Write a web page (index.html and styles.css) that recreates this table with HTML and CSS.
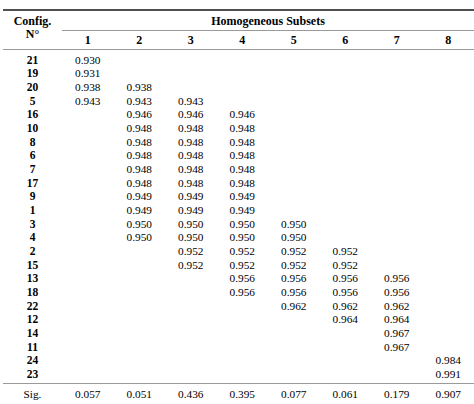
FILE: index.html
```html
<!DOCTYPE html>
<html>
<head>
<meta charset="utf-8">
<link rel="stylesheet" href="styles.css">
</head>
<body>
<table class="t">
<colgroup><col class="c0"><col><col><col><col><col><col><col><col></colgroup>
<thead>
<tr class="h1"><th rowspan="2" class="cfg">Config.<br>N°</th><th colspan="8" class="grp">Homogeneous Subsets</th></tr>
<tr class="h2"><th>1</th><th>2</th><th>3</th><th>4</th><th>5</th><th>6</th><th>7</th><th>8</th></tr>
</thead>
<tbody>
<tr class="first"><th>21</th><td>0.930</td><td></td><td></td><td></td><td></td><td></td><td></td><td></td></tr>
<tr><th>19</th><td>0.931</td><td></td><td></td><td></td><td></td><td></td><td></td><td></td></tr>
<tr><th>20</th><td>0.938</td><td>0.938</td><td></td><td></td><td></td><td></td><td></td><td></td></tr>
<tr><th>5</th><td>0.943</td><td>0.943</td><td>0.943</td><td></td><td></td><td></td><td></td><td></td></tr>
<tr><th>16</th><td></td><td>0.946</td><td>0.946</td><td>0.946</td><td></td><td></td><td></td><td></td></tr>
<tr><th>10</th><td></td><td>0.948</td><td>0.948</td><td>0.948</td><td></td><td></td><td></td><td></td></tr>
<tr><th>8</th><td></td><td>0.948</td><td>0.948</td><td>0.948</td><td></td><td></td><td></td><td></td></tr>
<tr><th>6</th><td></td><td>0.948</td><td>0.948</td><td>0.948</td><td></td><td></td><td></td><td></td></tr>
<tr><th>7</th><td></td><td>0.948</td><td>0.948</td><td>0.948</td><td></td><td></td><td></td><td></td></tr>
<tr><th>17</th><td></td><td>0.948</td><td>0.948</td><td>0.948</td><td></td><td></td><td></td><td></td></tr>
<tr><th>9</th><td></td><td>0.949</td><td>0.949</td><td>0.949</td><td></td><td></td><td></td><td></td></tr>
<tr><th>1</th><td></td><td>0.949</td><td>0.949</td><td>0.949</td><td></td><td></td><td></td><td></td></tr>
<tr><th>3</th><td></td><td>0.950</td><td>0.950</td><td>0.950</td><td>0.950</td><td></td><td></td><td></td></tr>
<tr><th>4</th><td></td><td>0.950</td><td>0.950</td><td>0.950</td><td>0.950</td><td></td><td></td><td></td></tr>
<tr><th>2</th><td></td><td></td><td>0.952</td><td>0.952</td><td>0.952</td><td>0.952</td><td></td><td></td></tr>
<tr><th>15</th><td></td><td></td><td>0.952</td><td>0.952</td><td>0.952</td><td>0.952</td><td></td><td></td></tr>
<tr><th>13</th><td></td><td></td><td></td><td>0.956</td><td>0.956</td><td>0.956</td><td>0.956</td><td></td></tr>
<tr><th>18</th><td></td><td></td><td></td><td>0.956</td><td>0.956</td><td>0.956</td><td>0.956</td><td></td></tr>
<tr><th>22</th><td></td><td></td><td></td><td></td><td>0.962</td><td>0.962</td><td>0.962</td><td></td></tr>
<tr><th>12</th><td></td><td></td><td></td><td></td><td></td><td>0.964</td><td>0.964</td><td></td></tr>
<tr><th>14</th><td></td><td></td><td></td><td></td><td></td><td></td><td>0.967</td><td></td></tr>
<tr><th>11</th><td></td><td></td><td></td><td></td><td></td><td></td><td>0.967</td><td></td></tr>
<tr><th>24</th><td></td><td></td><td></td><td></td><td></td><td></td><td></td><td>0.984</td></tr>
<tr class="last"><th>23</th><td></td><td></td><td></td><td></td><td></td><td></td><td></td><td>0.991</td></tr>
</tbody>
<tfoot>
<tr><td>Sig.</td><td>0.057</td><td>0.051</td><td>0.436</td><td>0.395</td><td>0.077</td><td>0.061</td><td>0.179</td><td>0.907</td></tr>
</tfoot>
</table>
</body>
</html>
```
FILE: styles.css
```css
html, body {
  margin: 0;
  padding: 0;
  background: #fff;
  overflow: hidden;
}
.t {
  margin: 9px 0 0 3px;
  width: 471px;
  table-layout: fixed;
  border-collapse: collapse;
  border-spacing: 0;
  border-top: 2px solid #505050;
  font-family: "Liberation Serif", "Times New Roman", serif;
  color: #000;
  font-size: 11.3px;
}
.c0 { width: 59px; }
th, td {
  padding: 0;
  text-align: center;
  font-weight: normal;
}
.t thead th {
  font-weight: bold;
  font-size: 12px;
}
.cfg {
  vertical-align: top;
  line-height: 12.7px;
  padding-top: 4.4px;
  border-bottom: 1px solid #9a9a9a;
}
.grp {
  line-height: 15px;
  padding: 3px 0 1px;
  border-bottom: 1px solid #9a9a9a;
}
.h2 th {
  line-height: 15px;
  padding: 2px 0 1px;
  border-bottom: 1px solid #9a9a9a;
}
.t tbody th {
  font-weight: bold;
  font-size: 11.5px;
}
.t tbody th, .t tbody td {
  line-height: 13.67px;
  vertical-align: baseline;
}
.t tbody tr.first th, .t tbody tr.first td {
  padding-top: 3.5px;
}
.t tbody tr.last th, .t tbody tr.last td {
  padding-bottom: 1px;
}
.t tfoot td {
  border-top: 1px solid #9a9a9a;
  line-height: 15px;
  padding: 3px 0 4px;
}
```
